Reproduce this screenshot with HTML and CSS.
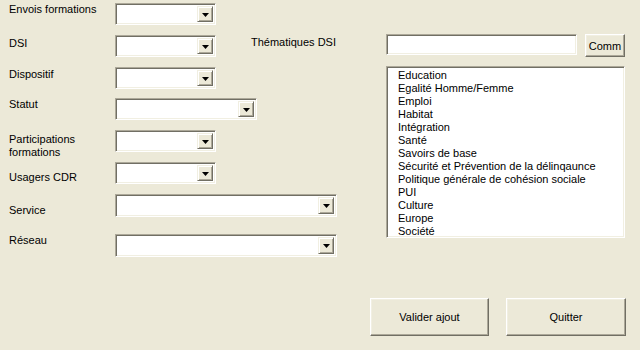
FILE: index.html
```html
<!DOCTYPE html>
<html lang="fr">
<head>
<meta charset="utf-8">
<title>Formulaire</title>
<link rel="stylesheet" href="styles.css">
</head>
<body>
<div class="form">
  <div class="main">
    <div class="left">
      <div class="lbl o0">Envois formations</div>
      <div class="combo w-s"><span class="drop"><svg width="7" height="4" viewBox="0 0 7 4"><polygon points="0,0 7,0 3.5,4" fill="#000"/></svg></span></div>

      <div class="lbl o2">DSI</div>
      <div class="pair">
        <div class="combo w-s"><span class="drop"><svg width="7" height="4" viewBox="0 0 7 4"><polygon points="0,0 7,0 3.5,4" fill="#000"/></svg></span></div>
        <div class="lbl o1">Thématiques DSI</div>
      </div>

      <div class="lbl o1">Dispositif</div>
      <div class="combo w-s"><span class="drop"><svg width="7" height="4" viewBox="0 0 7 4"><polygon points="0,0 7,0 3.5,4" fill="#000"/></svg></span></div>

      <div class="lbl o0">Statut</div>
      <div class="combo w-m"><span class="drop"><svg width="7" height="4" viewBox="0 0 7 4"><polygon points="0,0 7,0 3.5,4" fill="#000"/></svg></span></div>

      <div class="lbl o3">Participations<br>formations</div>
      <div class="combo w-s"><span class="drop"><svg width="7" height="4" viewBox="0 0 7 4"><polygon points="0,0 7,0 3.5,4" fill="#000"/></svg></span></div>

      <div class="lbl o9">Usagers CDR</div>
      <div class="combo w-s"><span class="drop"><svg width="7" height="4" viewBox="0 0 7 4"><polygon points="0,0 7,0 3.5,4" fill="#000"/></svg></span></div>

      <div class="lbl o10">Service</div>
      <div class="combo w-l"><span class="drop"><svg width="7" height="4" viewBox="0 0 7 4"><polygon points="0,0 7,0 3.5,4" fill="#000"/></svg></span></div>

      <div class="lbl o0">Réseau</div>
      <div class="combo w-l"><span class="drop"><svg width="7" height="4" viewBox="0 0 7 4"><polygon points="0,0 7,0 3.5,4" fill="#000"/></svg></span></div>
    </div>

    <div class="right">
      <div class="top-row">
        <div class="textbox"></div>
        <div class="btn btn-comm">Comm</div>
      </div>
      <ul class="listbox">
        <li>Education</li>
        <li>Egalité Homme/Femme</li>
        <li>Emploi</li>
        <li>Habitat</li>
        <li>Intégration</li>
        <li>Santé</li>
        <li>Savoirs de base</li>
        <li>Sécurité et Prévention de la délinqaunce</li>
        <li>Politique générale de cohésion sociale</li>
        <li>PUI</li>
        <li>Culture</li>
        <li>Europe</li>
        <li>Société</li>
      </ul>
    </div>
  </div>

  <div class="actions">
    <div class="btn btn-big">Valider ajout</div>
    <div class="btn btn-big btn-quit">Quitter</div>
  </div>
</div>
</body>
</html>
```

FILE: styles.css
```css
html, body {
  margin: 0;
  padding: 0;
  background: #ece9d8;
}

body {
  font-family: "Liberation Sans", Arial, sans-serif;
  font-size: 11px;
  line-height: 13px;
  color: #000;
}

.form {
  width: 640px;
  height: 350px;
  background: #ece9d8;
  overflow: hidden;
}

.main {
  display: flex;
  height: 298px;
}

.left {
  width: 386px;
  box-sizing: border-box;
  padding: 3px 0 0 9px;
  display: grid;
  grid-template-columns: 106px 1fr;
  grid-template-rows: 32px 32px 31px 32px 32px 32px 40px auto;
  align-items: start;
}

.lbl {
  white-space: nowrap;
}

.o0 { padding-top: 0; }
.o1 { padding-top: 1px; }
.o2 { padding-top: 2px; }
.o3 { padding-top: 3px; }
.o9 { padding-top: 9px; }
.o10 { padding-top: 10px; }

.pair {
  display: flex;
  align-items: flex-start;
  gap: 35px;
}

.combo {
  box-sizing: border-box;
  height: 22px;
  background: #fff;
  border: 1px solid;
  border-color: #aca899 #fff #fff #aca899;
  box-shadow: inset 1px 1px 0 #716f64, inset -1px -1px 0 #f1efe2;
  padding: 2px 2px 2px 0;
  display: flex;
  justify-content: flex-end;
}

.w-s { width: 101px; }
.w-m { width: 142px; }
.w-l { width: 222px; height: 23px; }

.drop {
  box-sizing: border-box;
  width: 16px;
  height: 100%;
  background: #ece9d8;
  border: 1px solid;
  border-color: #f1efe2 #716f64 #716f64 #f1efe2;
  box-shadow: inset 1px 1px 0 #fff, inset -1px -1px 0 #aca899;
  display: flex;
  align-items: center;
  justify-content: center;
}

.drop svg {
  display: block;
  margin-top: 1px;
}

.right {
  width: 240px;
  padding-top: 34px;
  display: flex;
  flex-direction: column;
}

.top-row {
  display: flex;
  align-items: flex-start;
  gap: 8px;
}

.textbox {
  box-sizing: border-box;
  width: 191px;
  height: 21px;
  background: #fff;
  border: 1px solid;
  border-color: #aca899 #fff #fff #aca899;
  box-shadow: inset 1px 1px 0 #716f64, inset -1px -1px 0 #f1efe2;
}

.btn {
  box-sizing: border-box;
  background: #ece9d8;
  border: 1px solid;
  border-color: #fff #716f64 #716f64 #fff;
  box-shadow: inset -1px -1px 0 #aca899, inset 1px 1px 0 #f1efe2;
  display: flex;
  align-items: center;
  justify-content: center;
  white-space: nowrap;
  overflow: hidden;
}

.btn-comm {
  width: 40px;
  height: 23px;
  padding-top: 2px;
}

.listbox {
  box-sizing: border-box;
  list-style: none;
  margin: 9px 0 0 0;
  width: 239px;
  height: 172px;
  padding: 2px 0 0 11px;
  background: #fff;
  border: 1px solid;
  border-color: #aca899 #fff #fff #aca899;
  box-shadow: inset 1px 1px 0 #716f64, inset -1px -1px 0 #f1efe2;
  overflow: hidden;
}

.listbox li {
  height: 13px;
  white-space: nowrap;
}

.actions {
  display: flex;
  justify-content: flex-end;
  gap: 17px;
  padding-right: 14px;
}

.btn-big {
  width: 119px;
  height: 38px;
}

.btn-quit {
  width: 120px;
}
```
